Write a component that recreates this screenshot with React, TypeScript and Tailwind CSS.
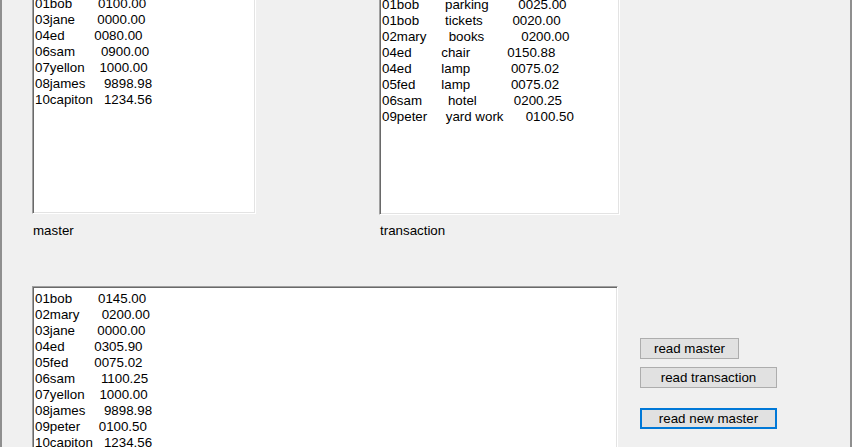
const master = [
  ["01bob", "0100.00"],
  ["03jane", "0000.00"],
  ["04ed", "0080.00"],
  ["06sam", "0900.00"],
  ["07yellon", "1000.00"],
  ["08james", "9898.98"],
  ["10capiton", "1234.56"],
];

const transactions = [
  ["01bob", "parking", "0025.00"],
  ["01bob", "tickets", "0020.00"],
  ["02mary", "books", "0200.00"],
  ["04ed", "chair", "0150.88"],
  ["04ed", "lamp", "0075.02"],
  ["05fed", "lamp", "0075.02"],
  ["06sam", "hotel", "0200.25"],
  ["09peter", "yard work", "0100.50"],
];

const newMaster = [
  ["01bob", "0145.00"],
  ["02mary", "0200.00"],
  ["03jane", "0000.00"],
  ["04ed", "0305.90"],
  ["05fed", "0075.02"],
  ["06sam", "1100.25"],
  ["07yellon", "1000.00"],
  ["08james", "9898.98"],
  ["09peter", "0100.50"],
  ["10capiton", "1234.56"],
];

function ListBox({ rows, className }: { rows: string[]; className: string }) {
  return (
    <div
      className={
        "bg-white border border-t-[#a0a0a0] border-l-[#a0a0a0] border-r-white border-b-white shadow-[inset_1px_1px_0_#696969,inset_-1px_-1px_0_#e3e3e3] pl-[2px] overflow-hidden " +
        className
      }
    >
      {rows.map((r, i) => (
        <div key={i} className="whitespace-pre leading-[16px] h-[16px]">
          {r}
        </div>
      ))}
    </div>
  );
}

function Button({ label, focused, className }: { label: string; focused?: boolean; className: string }) {
  return (
    <button
      className={
        "h-[21px] bg-[#e1e1e1] flex items-center justify-center leading-none " +
        (focused ? "border-2 border-[#0078d7] " : "border border-[#adadad] ") +
        className
      }
    >
      {label}
    </button>
  );
}

export default function App() {
  return (
    <div
      className="w-[852px] h-[447px] overflow-hidden bg-[#f0f0f0] border-x-2 border-[#8f8f8f] text-black text-[13.33px]"
      style={{ fontFamily: '"Liberation Sans", Arial, sans-serif' }}
    >
      <div className="pl-[30px]">
        {/* top row: master + transaction */}
        <div className="flex items-start">
          <div className="flex flex-col -mt-[8px]">
            <ListBox
              className="w-[224px] h-[222px] pt-[3px]"
              rows={master.map(([n, a]) => n.padEnd(12) + a)}
            />
            <div className="mt-[9px] ml-[1px] leading-[16px]">master</div>
          </div>
          <div className="flex flex-col -mt-[7px] ml-[123px]">
            <ListBox
              className="w-[241px] h-[222px] pt-[3px]"
              rows={transactions.map(([n, d, a]) => n.padEnd(12) + d.padEnd(15) + a)}
            />
            <div className="mt-[8px] ml-[1px] leading-[16px]">transaction</div>
          </div>
        </div>

        {/* bottom row: new master + buttons */}
        <div className="flex items-start mt-[47px]">
          <ListBox
            className="w-[586px] h-[180px] pt-[4px]"
            rows={newMaster.map(([n, a]) => n.padEnd(12) + a)}
          />
          <div className="flex flex-col items-start ml-[22px] pt-[52px]">
            <Button label="read master" className="w-[99px]" />
            <Button label="read transaction" className="w-[137px] mt-[8px]" />
            <Button label="read new master" focused className="w-[137px] mt-[20px]" />
          </div>
        </div>
      </div>
    </div>
  );
}
